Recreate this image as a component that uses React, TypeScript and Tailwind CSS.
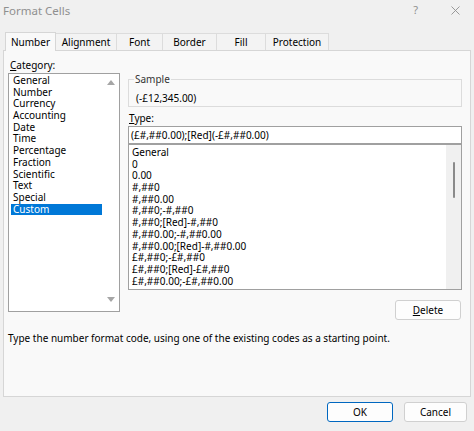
import React from "react";

const categories = [
  "General",
  "Number",
  "Currency",
  "Accounting",
  "Date",
  "Time",
  "Percentage",
  "Fraction",
  "Scientific",
  "Text",
  "Special",
  "Custom",
];

const formats = [
  "General",
  "0",
  "0.00",
  "#,##0",
  "#,##0.00",
  "#,##0;-#,##0",
  "#,##0;[Red]-#,##0",
  "#,##0.00;-#,##0.00",
  "#,##0.00;[Red]-#,##0.00",
  "£#,##0;-£#,##0",
  "£#,##0;[Red]-£#,##0",
  "£#,##0.00;-£#,##0.00",
];

const tabs = [
  { label: "Number", w: "w-[51px]" },
  { label: "Alignment", w: "w-[61px]" },
  { label: "Font", w: "w-[46px]" },
  { label: "Border", w: "w-[54px]" },
  { label: "Fill", w: "w-[49px]" },
  { label: "Protection", w: "w-[63px]" },
];

export default function App() {
  return (
    <div className="w-[474px] h-[431px] bg-[#f0f0f0] font-['Noto_Sans','Open_Sans',sans-serif] text-[10px] text-black flex flex-col overflow-hidden">
      {/* Title bar */}
      <div className="h-[21px] flex items-center pl-[3px] pr-[14px]">
        <span className="text-[11.5px] text-[#8f8f8f]">Format Cells</span>
        <span className="ml-auto mr-[33px] text-[11px] text-[#8f8f8f]">?</span>
        <svg width="9" height="9" viewBox="0 0 9 9" className="text-[#8f8f8f]">
          <path d="M0.5 0.5 L8.5 8.5 M8.5 0.5 L0.5 8.5" stroke="currentColor" strokeWidth="0.9" fill="none" />
        </svg>
      </div>

      {/* Tabs */}
      <div className="mt-[11px] h-[18px] flex items-end pl-[5px] relative z-10">
        {tabs.map((t, i) =>
          i === 0 ? (
            <div
              key={t.label}
              className={`${t.w} h-[19px] -mb-px bg-[#f9f9f9] border border-b-0 border-[#d6d6d6] flex items-center justify-center`}
            >
              {t.label}
            </div>
          ) : (
            <div
              key={t.label}
              className={`${t.w} h-[17px] bg-[#f3f3f3] border border-b-0 border-l-0 border-[#dcdcdc] flex items-center justify-center`}
            >
              {t.label}
            </div>
          )
        )}
      </div>

      {/* Panel */}
      <div className="mx-[3px] h-[347px] border border-[#d6d6d6] bg-[#f9f9f9] pt-[8px] pl-[4px] pr-[6px]">
        <div className="flex gap-[8px]">
          {/* Left column */}
          <div className="w-[112px] flex flex-col">
            <div className="h-[12px] leading-[12px] pl-[2px]">
              <span className="underline underline-offset-1">C</span>ategory:
            </div>
            <div className="mt-[2px] h-[239px] border border-[#a0a0a0] bg-white flex">
              <div className="flex-1 pt-[1px] pl-[2px]">
                {categories.map((c) => (
                  <div
                    key={c}
                    className={`h-[11.7px] leading-[11.7px] pl-[2px] ${
                      c === "Custom" ? "bg-[#0078d7] text-white" : ""
                    }`}
                  >
                    {c}
                  </div>
                ))}
              </div>
              <div className="w-[17px] flex flex-col items-center justify-between pt-[6px] pb-[9px]">
                <svg width="8" height="5" viewBox="0 0 8 5">
                  <path d="M0 5 L4 0 L8 5 Z" fill="#a6a6a6" />
                </svg>
                <svg width="8" height="5" viewBox="0 0 8 5">
                  <path d="M0 0 L8 0 L4 5 Z" fill="#a6a6a6" />
                </svg>
              </div>
            </div>
          </div>

          {/* Right column */}
          <div className="w-[334px] flex flex-col pt-[14px]">
            <fieldset className="h-[34px] border border-[#dcdcdc]">
              <legend className="ml-[5px] px-[1px] leading-[12px] text-[#333]">Sample</legend>
              <div className="mt-[7px] pl-[7px] leading-[12px]">(-£12,345.00)</div>
            </fieldset>
            <div className="mt-[5px] h-[12px] leading-[12px] pl-[1px]">
              <span className="underline underline-offset-1">T</span>ype:
            </div>
            <div className="mt-[2px] h-[18px] border border-[#a0a0a0] bg-white flex items-center pl-[2px]">
              (£#,##0.00);[Red](-£#,##0.00)
            </div>
            <div className="h-[146px] border border-[#a0a0a0] bg-white flex overflow-hidden">
              <div className="flex-1 pt-[2px] pl-[3px] overflow-hidden">
                {formats.map((f) => (
                  <div key={f} className="h-[11.7px] leading-[11.7px] whitespace-nowrap">
                    {f}
                  </div>
                ))}
              </div>
              <div className="w-[15px] bg-[#f0f0f0] flex justify-center pt-[17px]">
                <div className="w-[2px] h-[36px] rounded-full bg-[#8a8a8a]" />
              </div>
            </div>
            <div className="mt-[10px] flex justify-end pr-[1px]">
              <button className="w-[66px] h-[20px] border border-[#d0d0d0] rounded-[3px] bg-[#fdfdfd] flex items-center justify-center">
                <span>
                  <span className="underline underline-offset-1">D</span>elete
                </span>
              </button>
            </div>
          </div>
        </div>
        <div className="mt-[12px] leading-[12px]">
          Type the number format code, using one of the existing codes as a starting point.
        </div>
      </div>

      {/* Footer */}
      <div className="mt-[5px] flex justify-end gap-[11px] pr-[7px]">
        <button className="w-[66px] h-[20px] border border-[#0067c0] rounded-[3px] bg-[#fdfdfd] flex items-center justify-center">
          OK
        </button>
        <button className="w-[63px] h-[20px] border border-[#d0d0d0] rounded-[3px] bg-[#fdfdfd] flex items-center justify-center">
          Cancel
        </button>
      </div>
    </div>
  );
}
